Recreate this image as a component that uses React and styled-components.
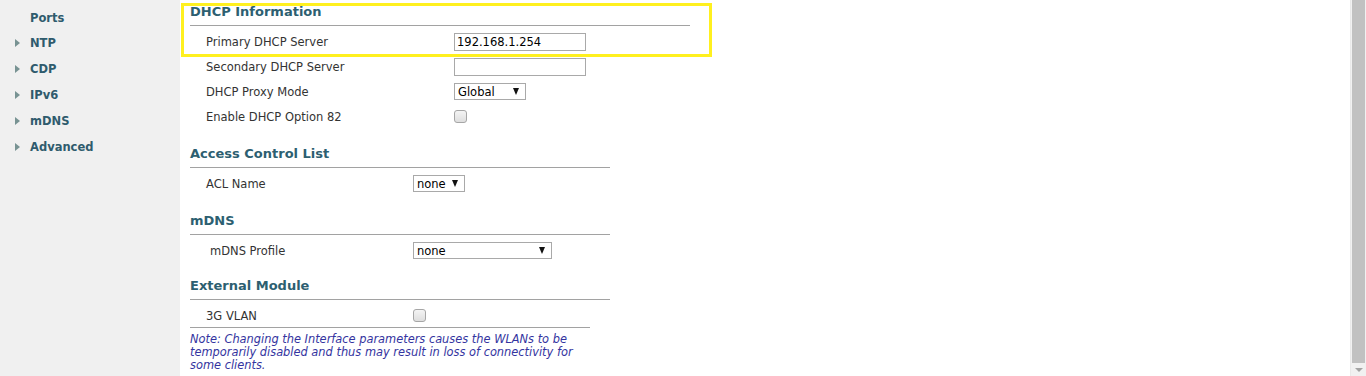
import React from 'react'
import styled, { createGlobalStyle } from 'styled-components'

const GlobalStyle = createGlobalStyle`
 html, body {
  margin: 0;
  padding: 0;
  background: #ffffff;
 }
 body {
  font-family: 'DejaVu Sans', Verdana, sans-serif;
 }
`

const Page = styled.div`
 display: flex;
 width: 1366px;
 height: 376px;
 overflow: hidden;
`

const Sidebar = styled.nav`
 width: 180px;
 flex-shrink: 0;
 background-color: #f0f0f0;
 padding-top: 6px;
 box-sizing: border-box;
`

const NavItem = styled.div`
 display: flex;
 align-items: center;
 height: ${(p) => (p.$first ? 24 : 26)}px;
 padding-left: 15px;
 font-size: 11.5px;
 font-weight: bold;
 color: #2f5b6d;
`

const Caret = styled.span`
 width: 0;
 height: 0;
 margin-right: 10px;
 border-top: 4px solid transparent;
 border-bottom: 4px solid transparent;
 border-left: 5px solid ${(p) => (p.$hidden ? 'transparent' : '#789393')};
`

const Main = styled.main`
 position: relative;
 flex: 1;
 padding-left: 10px;
 background: #ffffff;
`

const Highlight = styled.div`
 position: absolute;
 left: 1px;
 top: 3px;
 width: 531px;
 height: 54px;
 box-sizing: border-box;
 border: 3px solid #fff01f;
 pointer-events: none;
`

const Section = styled.section`
 width: ${(p) => p.$width}px;
 margin-top: ${(p) => p.$top}px;
`

const Heading = styled.h3`
 margin: 0;
 font-size: 13px;
 line-height: 16px;
 font-weight: bold;
 color: #2d5f71;
 padding-top: 1px;
 padding-bottom: 5px;
 border-bottom: 1px solid #a2a2a2;
`

const Rows = styled.div`
 padding-top: 3px;
`

const Row = styled.div`
 display: grid;
 grid-template-columns: ${(p) => p.$col}px 1fr;
 align-items: center;
 height: 25px;
`

const Label = styled.span`
 padding-left: ${(p) => p.$indent || 16}px;
 font-size: 11.5px;
 color: #333333;
`

const TextBox = styled.div`
 width: 132px;
 height: 18px;
 box-sizing: border-box;
 border: 1px solid #a9a9a9;
 padding-left: 2px;
 font-size: 11.5px;
 line-height: 16px;
 color: #000;
`

const Select = styled.div`
 display: flex;
 align-items: center;
 justify-content: space-between;
 width: ${(p) => p.$width}px;
 height: 17px;
 box-sizing: border-box;
 border: 1px solid #a9a9a9;
 padding: 0 6px 0 3px;
 font-size: 11.5px;
 color: #000;
`

const Arrow = styled.span`
 width: 0;
 height: 0;
 border-left: 3.5px solid transparent;
 border-right: 3.5px solid transparent;
 border-top: 7px solid #111;
 margin-top: -1px;
`

const Check = styled.div`
 width: 13px;
 height: 13px;
 box-sizing: border-box;
 border: 1px solid #a6a6a6;
 border-radius: 3px;
 background: linear-gradient(#f4f4f4, #dedede);
`

const Divider = styled.div`
 width: 400px;
 border-top: 1px solid #a2a2a2;
 margin-top: -1px;
`

const Note = styled.p`
 margin: 5px 0 0;
 width: 400px;
 font-size: 11.4px;
 line-height: 13px;
 font-style: italic;
 color: #3434a0;
`

const Scrollbar = styled.div`
 display: flex;
 flex-direction: column;
 width: 16px;
 flex-shrink: 0;
 background: #f1f1f1;
 border-left: 1px solid #e9e9e9;
 box-sizing: border-box;
 padding: 0 1px 0 1px;
`

const Thumb = styled.div`
 height: 363px;
 background: #c1c1c1;
`

const ScrollArrow = styled.div`
 flex: 1;
 display: flex;
 justify-content: center;
 align-items: center;
 &::after {
  content: '';
  border-left: 4px solid transparent;
  border-right: 4px solid transparent;
  border-top: 4px solid #a3a3a3;
 }
`

const navItems = [
 { label: 'Ports', caret: false },
 { label: 'NTP', caret: true },
 { label: 'CDP', caret: true },
 { label: 'IPv6', caret: true },
 { label: 'mDNS', caret: true },
 { label: 'Advanced', caret: true },
]

export default function App() {
 return (
  <>
   <GlobalStyle />
   <Page>
    <Sidebar>
     {navItems.map((item, i) => (
      <NavItem key={item.label} $first={i === 0}>
       <Caret $hidden={!item.caret} />
       {item.label}
      </NavItem>
     ))}
    </Sidebar>

    <Main>
     <Section $width={500} $top={3}>
      <Heading>DHCP Information</Heading>
      <Rows>
       <Row $col={264}>
        <Label>Primary DHCP Server</Label>
        <TextBox>192.168.1.254</TextBox>
       </Row>
       <Row $col={264}>
        <Label>Secondary DHCP Server</Label>
        <TextBox />
       </Row>
       <Row $col={264}>
        <Label>DHCP Proxy Mode</Label>
        <Select $width={72}>
         Global
         <Arrow />
        </Select>
       </Row>
       <Row $col={264}>
        <Label>Enable DHCP Option 82</Label>
        <Check />
       </Row>
      </Rows>
     </Section>

     <Section $width={420} $top={16}>
      <Heading>Access Control List</Heading>
      <Rows>
       <Row $col={223}>
        <Label>ACL Name</Label>
        <Select $width={52}>
         none
         <Arrow />
        </Select>
       </Row>
      </Rows>
     </Section>

     <Section $width={420} $top={16}>
      <Heading>mDNS</Heading>
      <Rows>
       <Row $col={223}>
        <Label $indent={20}>mDNS Profile</Label>
        <Select $width={139}>
         none
         <Arrow />
        </Select>
       </Row>
      </Rows>
     </Section>

     <Section $width={420} $top={14}>
      <Heading>External Module</Heading>
      <Rows>
       <Row $col={223}>
        <Label>3G VLAN</Label>
        <Check />
       </Row>
      </Rows>
     </Section>

     <Divider />
     <Note>
      Note: Changing the Interface parameters causes the WLANs to be
      temporarily disabled and thus may result in loss of connectivity for
      some clients.
     </Note>

     <Highlight />
    </Main>

    <Scrollbar>
     <Thumb />
     <ScrollArrow />
    </Scrollbar>
   </Page>
  </>
 )
}
